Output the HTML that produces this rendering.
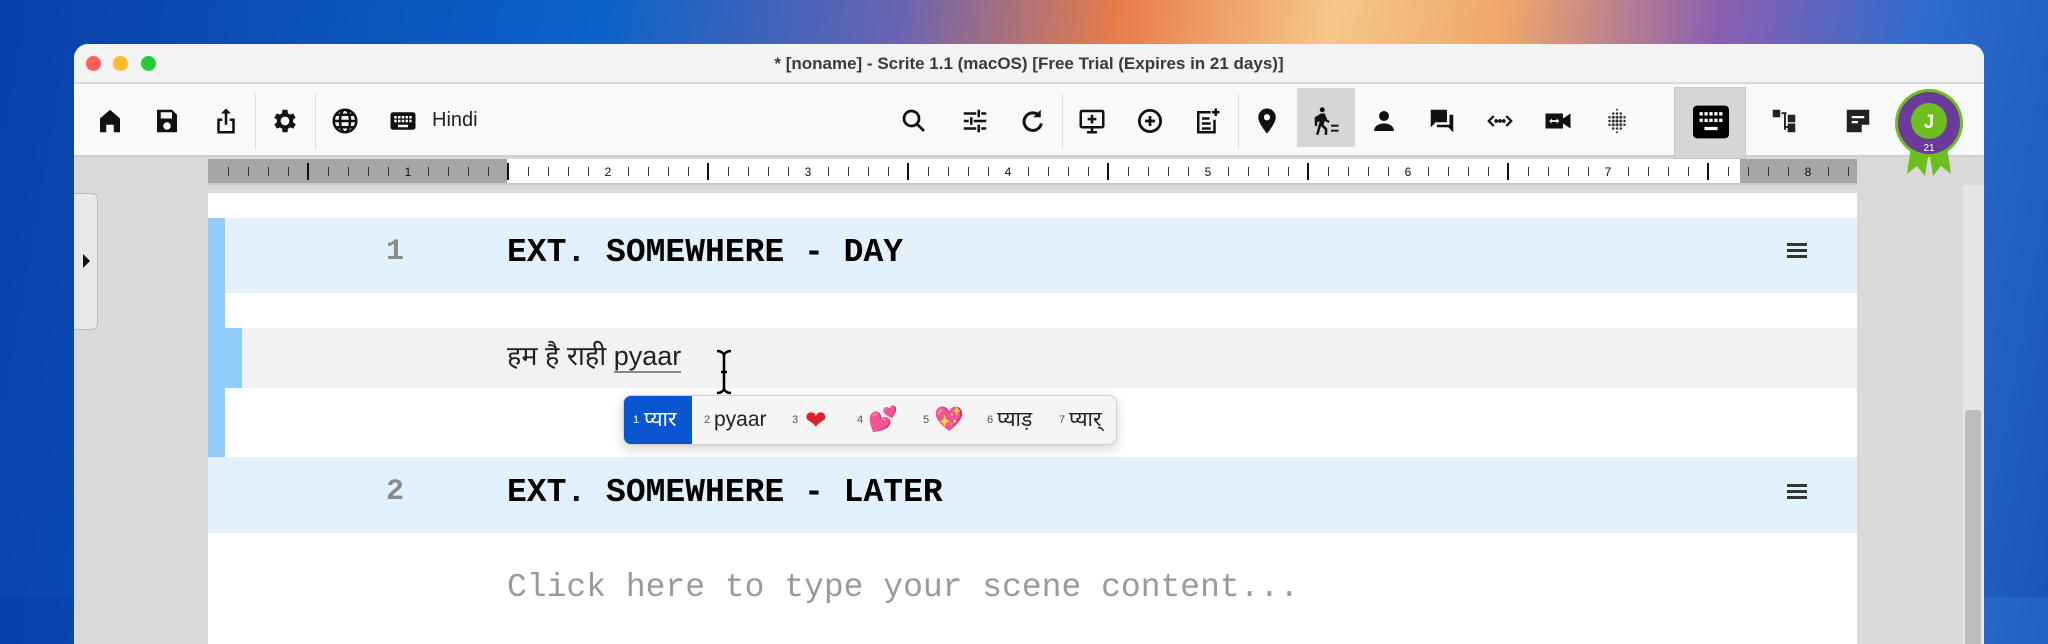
<!DOCTYPE html>
<html><head><meta charset="utf-8"><style>
*{margin:0;padding:0;box-sizing:border-box}
body{width:2048px;height:597px;overflow:hidden;position:relative;font-family:"Liberation Sans","Noto Sans CJK SC",sans-serif;
background:linear-gradient(100deg,#0a3fa8 0%,#0b62c8 28%,#6a64b0 42%,#e87c4a 52%,#f5c78a 62%,#f0a86a 70%,#8a5fb0 80%,#2a6ccf 90%,#1a56b8 100%)}
.win{position:absolute;left:74px;top:44px;width:1910px;height:600px;border-radius:14px 14px 0 0;overflow:hidden;background:#d9d9d9}
.title{position:absolute;left:0;top:0;width:100%;height:39px;background:#f4f3f3;border-bottom:1px solid #dcdcdc;text-align:center;line-height:39px;font-size:17px;font-weight:bold;color:#3a3a3a}
.tl{position:absolute;top:12px;width:15px;height:15px;border-radius:50%}
.tb{position:absolute;left:0;top:40px;width:100%;height:73px;background:#f9f9f9;border-bottom:2px solid #cfcfcf}
.ic{position:absolute;top:22px;width:30px;height:30px}
.sep{position:absolute;top:10px;width:1px;height:56px;background:#ddd}
.ruler{position:absolute;left:134px;top:115px;width:1649px;height:26px;background:#fff;border-bottom:2px solid #c8c8c8}
.page{position:absolute;left:134px;top:149px;width:1649px;height:460px;background:#fff}
.mono{font-family:"Liberation Mono",monospace;font-weight:bold;font-size:33px;position:absolute;white-space:nowrap}
</style></head><body>
<div class="win">
 <div class="title">* [noname] - Scrite 1.1 (macOS) [Free Trial (Expires in 21 days)]
  <div class="tl" style="left:12px;background:#fe5f57"></div>
  <div class="tl" style="left:39px;background:#febc2e"></div>
  <div class="tl" style="left:67px;background:#28c840"></div>
 </div>
 <div class="tb">
  <svg class="ic" style="left:21px" viewBox="0 0 24 24"><path d="M12 3L4 10v11h5v-6h6v6h5V10z" fill="#111"/></svg>
  <svg class="ic" style="left:78px" viewBox="0 0 24 24"><path d="M5 3h11l4 4v14H4V3zm2 2v5h9V5zm5 8a3 3 0 100 6 3 3 0 000-6z" fill="#111"/></svg>
  <svg class="ic" style="left:137px" viewBox="0 0 24 24"><path d="M12 2l-4 4h3v9h2V6h3zM5 10h4v2H7v8h10v-8h-2v-2h4v12H5z" fill="#111"/></svg>
  <div class="sep" style="left:181px"></div>
  <svg class="ic" style="left:196px" viewBox="0 0 24 24"><path d="M19.4 13a7.5 7.5 0 000-2l2.1-1.6-2-3.5-2.5 1a7 7 0 00-1.7-1L15 3h-4l-.4 2.9a7 7 0 00-1.7 1l-2.5-1-2 3.5L6.6 11a7.5 7.5 0 000 2l-2.1 1.6 2 3.5 2.5-1a7 7 0 001.7 1L11 21h4l.4-2.9a7 7 0 001.7-1l2.5 1 2-3.5zM13 15.5a3.5 3.5 0 110-7 3.5 3.5 0 010 7z" fill="#111" transform="translate(-1 0)"/></svg>
  <div class="sep" style="left:241px"></div>
  <svg class="ic" style="left:256px" viewBox="0 0 24 24" fill="none" stroke="#111" stroke-width="2"><circle cx="12" cy="12" r="9"/><ellipse cx="12" cy="12" rx="4" ry="9"/><path d="M3 12h18M5 7h14M5 17h14"/></svg>
  <svg class="ic" style="left:314px" viewBox="0 0 24 24"><rect x="2" y="5" width="20" height="14" rx="2" fill="#111"/><path d="M5 8h2v2H5zm3 0h2v2H8zm3 0h2v2h-2zm3 0h2v2h-2zm3 0h2v2h-2zM5 11h2v2H5zm3 0h2v2H8zm3 0h2v2h-2zm3 0h2v2h-2zm3 0h2v2h-2zM8 15h8v2H8z" fill="#fff"/></svg>
  <div style="position:absolute;left:358px;top:25px;font-size:20px;color:#222">Hindi</div>
  <svg class="ic" style="left:825px" viewBox="0 0 24 24" fill="none" stroke="#111" stroke-width="2.2"><circle cx="10" cy="10" r="6"/><path d="M14.5 14.5L20 20"/></svg>
  <svg class="ic" style="left:886px" viewBox="0 0 24 24" fill="none" stroke="#111" stroke-width="2"><path d="M3 6h10M17 6h4M15 3v6M3 12h4M11 12h10M9 9v6M3 18h10M17 18h4M15 15v6"/></svg>
  <svg class="ic" style="left:943px" viewBox="0 0 24 24" fill="none" stroke="#111" stroke-width="2.4"><path d="M18 8a7 7 0 101.5 6"/><path d="M19 3v6h-6" fill="#111" stroke="none"/></svg>
  <div class="sep" style="left:988px"></div>
  <svg class="ic" style="left:1003px" viewBox="0 0 24 24" fill="none" stroke="#111" stroke-width="2"><rect x="3" y="4" width="18" height="13" rx="1"/><path d="M12 7v7M8.5 10.5h7M8 21h8M12 17v4"/></svg>
  <svg class="ic" style="left:1061px" viewBox="0 0 24 24" fill="none" stroke="#111" stroke-width="2.2"><circle cx="12" cy="12" r="8.5"/><path d="M12 8v8M8 12h8"/></svg>
  <svg class="ic" style="left:1118px" viewBox="0 0 24 24" fill="none" stroke="#111" stroke-width="2"><path d="M15 5H5v16h13V11"/><path d="M8 10h6M8 14h7M8 18h7M19 2v6M16 5h6"/></svg>
  <div class="sep" style="left:1164px"></div>
  <svg class="ic" style="left:1178px" viewBox="0 0 24 24"><path d="M12 2a7 7 0 00-7 7c0 5 7 13 7 13s7-8 7-13a7 7 0 00-7-7zm0 9.5a2.5 2.5 0 110-5 2.5 2.5 0 010 5z" fill="#111"/></svg>
  <div style="position:absolute;left:1223px;top:4px;width:58px;height:59px;background:#d6d6d6"></div>
  <svg class="ic" style="left:1237px" viewBox="0 0 24 24" fill="#111"><circle cx="9" cy="3" r="2"/><path d="M8 6h3l2 5 2 1-1 1.5-3-1.5-1 3 3 3v5h-2v-4l-3-3-2 7H4l3-11-2 1v3H3V9l5-3z"/><path d="M16 15h6v1.5h-6zM16 19h6v1.5h-6z"/></svg>
  <svg class="ic" style="left:1295px" viewBox="0 0 24 24" fill="#111"><circle cx="12" cy="8" r="4"/><path d="M4 20c0-4 4-6 8-6s8 2 8 6z"/></svg>
  <svg class="ic" style="left:1353px" viewBox="0 0 24 24" fill="#111"><path d="M3 3h13v10H7l-4 4z"/><path d="M18 7h3v14l-4-4H8v-2h10z"/></svg>
  <svg class="ic" style="left:1411px" viewBox="0 0 24 24" fill="none" stroke="#111" stroke-width="1.8"><path d="M7 8l-4 4 4 4M17 8l4 4-4 4"/><circle cx="9" cy="12" r=".6" fill="#111"/><circle cx="12" cy="12" r=".6" fill="#111"/><circle cx="15" cy="12" r=".6" fill="#111"/></svg>
  <svg class="ic" style="left:1469px" viewBox="0 0 24 24" fill="#111"><path d="M2 6h14v12H2zM16 10l6-4v12l-6-4z"/><path d="M5 12l2-2v1.3h4V10l2 2-2 2v-1.3H7V14z" fill="#fff"/></svg>
  <svg class="ic" style="left:1528px" viewBox="0 0 24 24" fill="#333"><g><circle cx="12" cy="3" r=".8"/><circle cx="9" cy="6" r="1"/><circle cx="12" cy="6" r="1"/><circle cx="15" cy="6" r="1"/><circle cx="6" cy="9" r="1"/><circle cx="9" cy="9" r="1.2"/><circle cx="12" cy="9" r="1.2"/><circle cx="15" cy="9" r="1.2"/><circle cx="18" cy="9" r="1"/><circle cx="6" cy="12" r="1"/><circle cx="9" cy="12" r="1.2"/><circle cx="12" cy="12" r="1.3"/><circle cx="15" cy="12" r="1.2"/><circle cx="18" cy="12" r="1"/><circle cx="6" cy="15" r="1"/><circle cx="9" cy="15" r="1.2"/><circle cx="12" cy="15" r="1.2"/><circle cx="15" cy="15" r="1.2"/><circle cx="18" cy="15" r="1"/><circle cx="9" cy="18" r="1"/><circle cx="12" cy="18" r="1"/><circle cx="15" cy="18" r="1"/><circle cx="12" cy="21" r=".8"/></g></svg>
  <div style="position:absolute;left:1600px;top:3px;width:72px;height:72px;background:#d6d6d6;border:1px solid #c6c6c6"></div>
  <svg style="position:absolute;left:1617px;top:20px;width:40px;height:36px" viewBox="0 0 24 22"><rect x="1" y="1" width="22" height="20" rx="2.5" fill="#000"/><path d="M5 5h2v2H5zm3 0h2v2H8zm3 0h2v2h-2zm3 0h2v2h-2zm3 0h2v2h-2zM5 9h2v2H5zm3 0h2v2H8zm3 0h2v2h-2zm3 0h2v2h-2zm3 0h2v2h-2zM8 14h8v2H8z" fill="#fff"/></svg>
  <svg class="ic" style="left:1695px" viewBox="0 0 24 24" fill="#222"><path d="M3 3h6v6H3zM10 5h4v1.5h-4zM12 5h1.5v14H12zM15 7h6v6h-6zM12 16h3v1.5h-3zM15 14h6v7h-6z"/></svg>
  <svg class="ic" style="left:1769px" viewBox="0 0 24 24" fill="#222"><path d="M3 3h18v12l-6 6H3z"/><path d="M7 8h10v1.8H7zM7 12h5v1.8H7zM15 15h6l-6 6z" fill="#fff"/></svg>
 </div>
 <div style="position:absolute;left:-2px;top:149px;width:26px;height:137px;background:#e8e8e8;border:1px solid #bbb;border-radius:0 6px 6px 0"></div>
 <div style="position:absolute;left:9px;top:210px;width:0;height:0;border-left:7px solid #111;border-top:7px solid transparent;border-bottom:7px solid transparent"></div>
 <div class="ruler">
  <div style="position:absolute;left:0;top:0;width:299px;height:24px;background:#a6a6a6"></div>
  <div style="position:absolute;left:1532px;top:0;width:117px;height:24px;background:#a6a6a6"></div>
  <svg style="position:absolute;left:0;top:0" width="1649" height="26" id="rs"></svg>
 </div>
 <div style="position:absolute;left:1889px;top:141px;width:21px;height:460px;background:#e6e6e6"></div>
 <div style="position:absolute;left:1891px;top:366px;width:16px;height:240px;background:#bdbdbd;border-radius:3px"></div>
 <div class="page">
  <div style="position:absolute;left:0;top:25px;width:1649px;height:75px;background:#e3f1fd"></div>
  <div style="position:absolute;left:0;top:25px;width:17px;height:239px;background:#92cdf9"></div>
  <div style="position:absolute;left:17px;top:135px;width:17px;height:60px;background:#92cdf9"></div>
  <div style="position:absolute;left:34px;top:135px;width:1615px;height:60px;background:#f2f2f2"></div>
  <div class="mono" style="left:178px;top:42px;color:#8a8a8a;font-size:30px">1</div>
  <div class="mono" style="left:299px;top:41px;color:#000">EXT. SOMEWHERE - DAY</div>
  <div style="position:absolute;left:1579px;top:50px;width:20px;height:3px;background:#333;box-shadow:0 6px 0 #333,0 12px 0 #333"></div>
  <div style="position:absolute;left:299px;top:143px;font-size:27px;color:#222;font-family:'Liberation Sans','Noto Sans CJK SC','DejaVu Sans',sans-serif;white-space:nowrap">हम है राही <span style="border-bottom:2px solid #888">pyaar</span></div>
  <div style="position:absolute;left:0;top:264px;width:1649px;height:76px;background:#e3f1fd"></div>
  <div class="mono" style="left:178px;top:282px;color:#8a8a8a;font-size:30px">2</div>
  <div class="mono" style="left:299px;top:281px;color:#000">EXT. SOMEWHERE - LATER</div>
  <div style="position:absolute;left:1579px;top:291px;width:20px;height:3px;background:#333;box-shadow:0 6px 0 #333,0 12px 0 #333"></div>
  <div class="mono" style="left:299px;top:376px;color:#9a9a9a;font-weight:normal">Click here to type your scene content...</div>
 </div>
 <div style="position:absolute;left:549px;top:351px;width:494px;height:50px;background:#f4f4f4;border:1px solid #cfcfcf;border-radius:8px;box-shadow:0 4px 12px rgba(0,0,0,.18);overflow:hidden;font-family:'Liberation Sans','Noto Sans CJK SC','DejaVu Sans',sans-serif;white-space:nowrap">
  <div style="position:absolute;left:0;top:0;width:68px;height:50px;background:#0a55d0"></div>
  <div style="position:absolute;top:0;left:0;height:50px;line-height:48px;font-size:21px;color:#222">
   <span style="position:absolute;left:9px;font-size:11px;color:#fff">1</span><span style="position:absolute;left:20px;color:#fff">प्यार</span>
   <span style="position:absolute;left:80px;font-size:11px;color:#555">2</span><span style="position:absolute;left:90px">pyaar</span>
   <span style="position:absolute;left:168px;font-size:11px;color:#555">3</span><span style="position:absolute;left:181px;color:#e0202a;font-size:26px">❤</span>
   <span style="position:absolute;left:233px;font-size:11px;color:#555">4</span><span style="position:absolute;left:244px;color:#e83e8c;font-size:24px">💕</span>
   <span style="position:absolute;left:299px;font-size:11px;color:#555">5</span><span style="position:absolute;left:310px;color:#e83e8c;font-size:24px">💖</span>
   <span style="position:absolute;left:363px;font-size:11px;color:#555">6</span><span style="position:absolute;left:373px">प्याड़</span>
   <span style="position:absolute;left:435px;font-size:11px;color:#555">7</span><span style="position:absolute;left:445px">प्यार्</span>
  </div>
 </div>
 <svg style="position:absolute;left:640px;top:305px" width="20" height="46" viewBox="0 0 20 46" fill="none" stroke="#000" stroke-width="2.5"><path d="M3 2c4 0 7 2 7 5 0-3 3-5 7-5M10 7v32M3 44c4 0 7-2 7-5 0 3 3 5 7 5M7 23h6"/></svg>
</div>
<svg style="position:absolute;left:1893px;top:88px" width="72" height="90" viewBox="0 0 72 90">
 <path d="M18 58l-4 28 10-8 8 10 4-26zM54 58l4 28-10-8-8 10-4-26z" fill="#6cbf1e"/>
 <circle cx="36" cy="35" r="34" fill="#6cbf1e"/>
 <circle cx="36" cy="35" r="31" fill="#6b3a9a"/>
 <circle cx="36" cy="33" r="18" fill="#6cbf1e"/>
 <text x="36" y="40" text-anchor="middle" font-family="Liberation Sans" font-weight="bold" font-size="19" fill="#fff">J</text>
 <text x="36" y="63" text-anchor="middle" font-family="Liberation Sans" font-size="10" fill="#fff">21</text>
</svg>
<script>
var s=document.getElementById('rs'),h='';
for(var i=1;i<83;i++){var x=i*20;if(x>1645)break;var k=i%10;
 if(k==5)h+='<rect x="'+(x-1)+'" y="4" width="2" height="17" fill="#111"/>';
 else if(k==0)h+='<text x="'+x+'" y="17" font-size="12" font-family="Liberation Sans" text-anchor="middle" fill="#111">'+(i/10)+'</text>';
 else h+='<rect x="'+x+'" y="8" width="1" height="9" fill="#333"/>';}
s.innerHTML=h;
</script>
</body></html>
